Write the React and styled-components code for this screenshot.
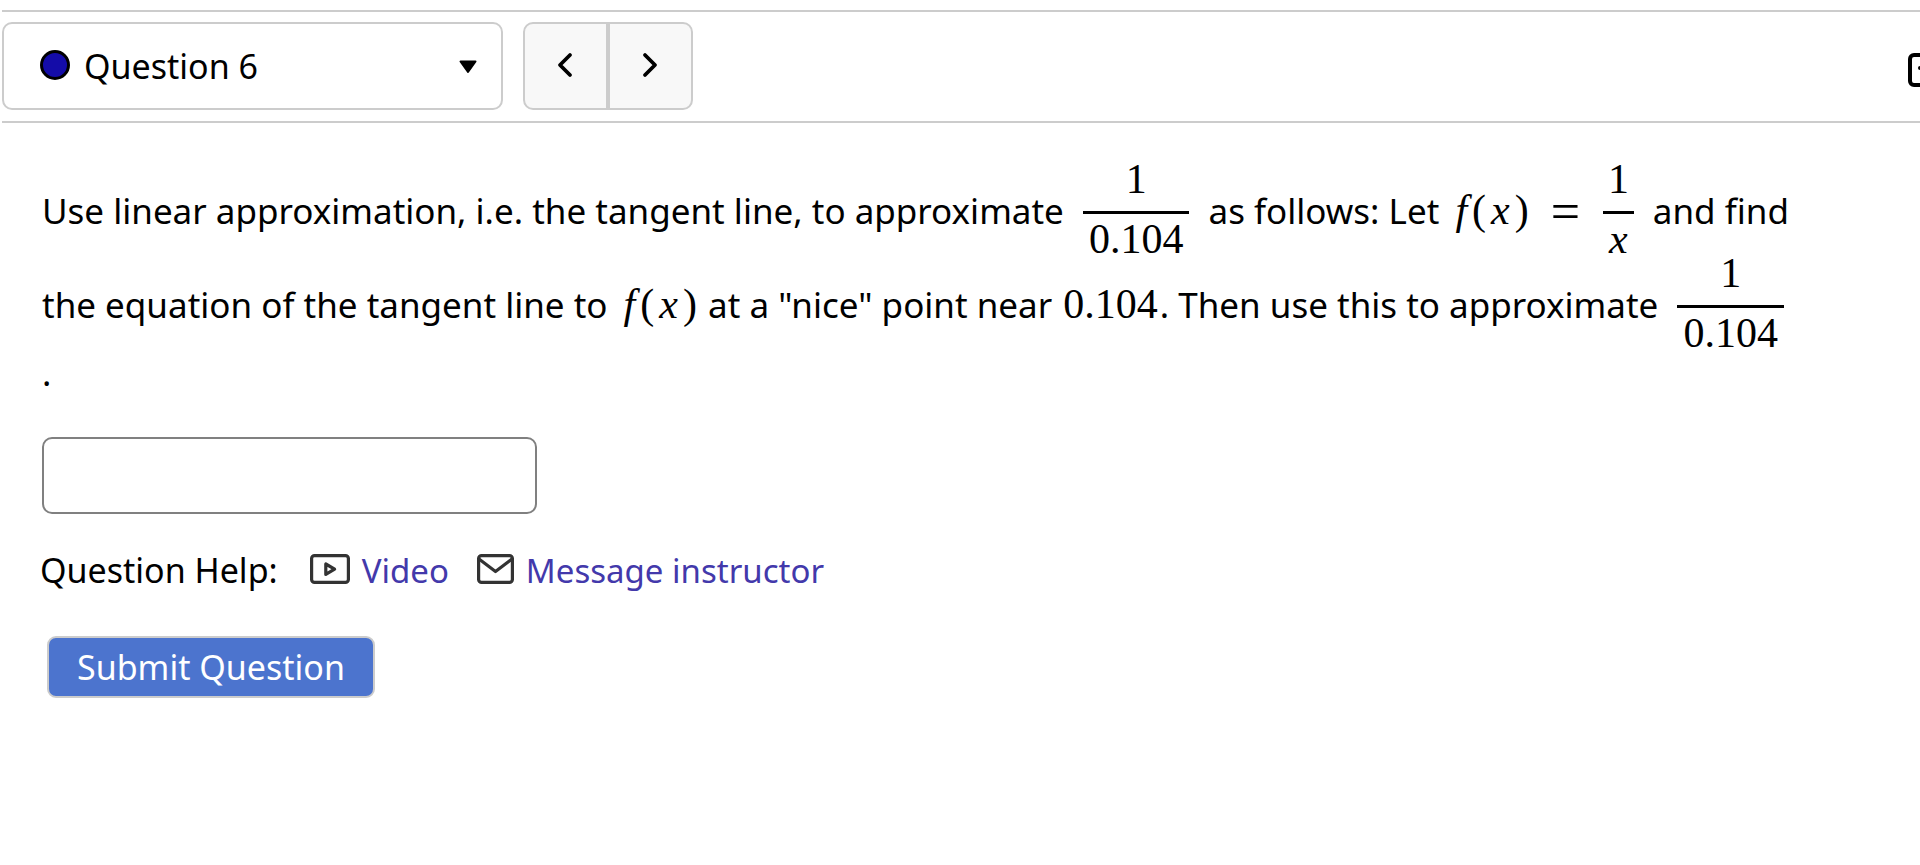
import React, { useState } from 'react';
import styled, { createGlobalStyle } from 'styled-components';

const GlobalStyle = createGlobalStyle`
  * {
    box-sizing: border-box;
  }
  body {
    margin: 0;
    overflow-x: hidden;
    background: #fff;
    color: #000;
    font-family: 'Noto Sans', 'Trebuchet MS', sans-serif;
    font-size: 35px;
    line-height: 45px;
  }
`;

const Page = styled.div`
  padding: 10px 0 40px 2px;
  overflow: hidden;
`;

const Toolbar = styled.header`
  display: flex;
  align-items: center;
  gap: 20px;
  padding: 10px 0 11px;
  border-top: 2px solid #ccc;
  border-bottom: 2px solid #ccc;
`;

const Picker = styled.div`
  position: relative;
  flex: 0 0 501px;
  svg {
    position: absolute;
    pointer-events: none;
  }
  .picker__dot {
    top: 28px;
    left: 38px;
  }
  .picker__arrow {
    top: 38px;
    right: 26px;
  }
  select {
    appearance: none;
    display: block;
    width: 100%;
    height: 88px;
    padding: 0 60px 0 80px;
    border: 2px solid #ccc;
    border-radius: 10px;
    background: #fff;
    color: inherit;
    font: inherit;
    font-size: 34px;
    cursor: pointer;
  }
`;

const StepGroup = styled.div`
  display: flex;
`;

const StepButton = styled.button`
  display: flex;
  align-items: center;
  justify-content: center;
  width: 85px;
  height: 88px;
  padding: 0 2px 3px 0;
  border: 2px solid #ccc;
  border-radius: ${(props) => (props.$side === 'left' ? '10px 0 0 10px' : '0 10px 10px 0')};
  background: #f8f8f8;
  cursor: pointer;
`;

/* sits half past the right edge, the page clips it */
const PrintButton = styled.button`
  display: flex;
  flex: none;
  margin: 8px -24px 0 auto;
  padding: 0;
  border: none;
  background: none;
  cursor: pointer;
`;

const Question = styled.main`
  padding: 39px 124px 0 40px;
`;

const Prompt = styled.p`
  margin: 0 0 42px;
`;

const MathText = styled.span`
  margin: 0 2px;
  font-family: 'Liberation Serif', 'Times New Roman', serif;
  font-size: 42px;
  white-space: nowrap;
  i {
    margin: 0 5px;
  }
`;

/* lowered onto the fraction bars */
const Equals = styled.span`
  margin: 0 11px 0 18px;
  font-size: 52px;
  line-height: 0;
  vertical-align: -5px;
`;

const FractionBox = styled.span`
  display: inline-flex;
  flex-direction: column;
  margin: 0 10px;
  vertical-align: 31px;
  font-family: 'Liberation Serif', 'Times New Roman', serif;
  font-size: 42px;
  line-height: 34px;
  text-align: center;
  .fraction__top {
    padding-bottom: 15px;
    border-bottom: 3px solid #000;
  }
  .fraction__bottom {
    padding: 8px 6px 0;
  }
`;

const AnswerInput = styled.input`
  display: block;
  width: 495px;
  height: 77px;
  padding: 0 16px;
  border: 2px solid #808080;
  border-radius: 10px;
  background: #fff;
  font: inherit;
`;

const Help = styled.div`
  display: flex;
  align-items: center;
  margin: 34px 0 0 -2px;
  font-size: 34px;
`;

const HelpLink = styled.a`
  display: flex;
  align-items: center;
  gap: 12px;
  margin-left: ${(props) => props.$gap}px;
  color: #4339ab;
  font-size: 33px;
  text-decoration: none;
  svg {
    margin-bottom: 4px;
  }
`;

const SubmitButton = styled.button`
  display: block;
  height: 62px;
  margin: 43px 0 0 5px;
  padding: 0 28px;
  border: 2px solid #ccc;
  border-radius: 9px;
  background: #4c74ce;
  color: #fff;
  font: inherit;
  font-size: 34px;
  cursor: pointer;
`;

function Fraction({ top, bottom }) {
  return (
    <FractionBox>
      <span className="fraction__top">{top}</span>
      <span className="fraction__bottom">{bottom}</span>
    </FractionBox>
  );
}

function Fx() {
  return (
    <MathText>
      <i>f</i>(<i>x</i>)
    </MathText>
  );
}

function Chevron({ points }) {
  return (
    <svg width="16" height="26" viewBox="0 0 16 26" fill="none" stroke="#000" strokeWidth="3.8" strokeLinecap="round" strokeLinejoin="round">
      <polyline points={points} />
    </svg>
  );
}

function VideoIcon() {
  return (
    <svg width="40" height="30" viewBox="0 0 40 30" fill="none" stroke="#333" strokeWidth="3.2" strokeLinejoin="round">
      <rect x="1.6" y="1.6" width="36.8" height="26.8" rx="3" />
      <path d="M15.8 10v10.4l8.8-5.2z" />
    </svg>
  );
}

function MailIcon() {
  return (
    <svg width="37" height="30" viewBox="0 0 37 30" fill="none" stroke="#333" strokeWidth="3.2" strokeLinejoin="round">
      <rect x="1.6" y="1.6" width="33.8" height="26.8" rx="3" />
      <path d="M2 5l16.5 12.5L35 5" />
    </svg>
  );
}

export default function App() {
  const [question, setQuestion] = useState('6');
  const [answer, setAnswer] = useState('');

  return (
    <>
      <GlobalStyle />
      <Page>
        <Toolbar>
          <Picker>
            <select aria-label="Question" value={question} onChange={(e) => setQuestion(e.target.value)}>
              <option value="6">Question 6</option>
            </select>
            <svg className="picker__dot" width="30" height="30" viewBox="0 0 30 30">
              <circle cx="15" cy="15" r="13.5" fill="#140ca8" stroke="#000" strokeWidth="3" />
            </svg>
            <svg className="picker__arrow" width="18" height="14" viewBox="0 0 18 14">
              <path d="M1.5 1.5h15L9 12z" stroke="#000" strokeWidth="2" strokeLinejoin="round" />
            </svg>
          </Picker>
          <StepGroup>
            <StepButton $side="left" type="button" aria-label="Previous question">
              <Chevron points="13,3 3,13 13,23" />
            </StepButton>
            <StepButton $side="right" type="button" aria-label="Next question">
              <Chevron points="3,3 13,13 3,23" />
            </StepButton>
          </StepGroup>
          <PrintButton type="button" aria-label="Print">
            <svg width="36" height="34" viewBox="0 0 36 34" fill="none" stroke="#000" strokeWidth="4">
              <rect x="2" y="2" width="32" height="30" rx="4" />
              <path d="M12 15h12" strokeLinecap="round" />
            </svg>
          </PrintButton>
        </Toolbar>

        <Question>
          <Prompt>
            Use linear approximation, i.e. the tangent line, to approximate{' '}
            <Fraction top="1" bottom="0.104" /> as follows: Let <Fx />
            <MathText>
              <Equals>=</Equals>
            </MathText>
            <Fraction top="1" bottom={<i>x</i>} /> and find the equation of the tangent line to{' '}
            <Fx /> at a "nice" point near <MathText>0.104</MathText>. Then use this to approximate{' '}
            <Fraction top="1" bottom="0.104" />
            <wbr />.
          </Prompt>
          <AnswerInput aria-label="Answer" value={answer} onChange={(e) => setAnswer(e.target.value)} />
          <Help>
            <span>Question Help:</span>
            <HelpLink $gap={32} href="#video">
              <VideoIcon />
              Video
            </HelpLink>
            <HelpLink $gap={28} href="#message">
              <MailIcon />
              Message instructor
            </HelpLink>
          </Help>
          <SubmitButton type="button">Submit Question</SubmitButton>
        </Question>
      </Page>
    </>
  );
}
